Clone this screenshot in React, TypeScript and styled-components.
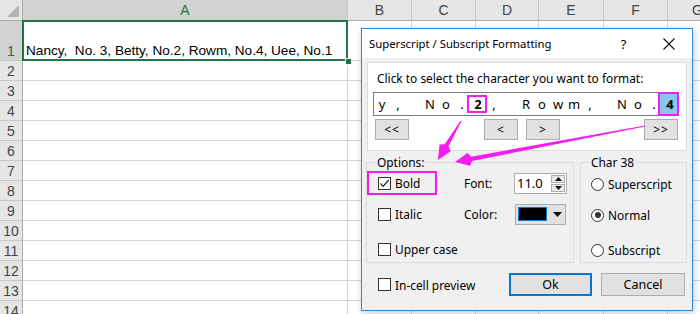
import React from 'react'
import styled, { createGlobalStyle, css } from 'styled-components'

const GlobalStyle = createGlobalStyle`
  html, body {
    margin: 0;
    padding: 0;
    background: #fff;
  }
  body {
    width: 700px;
    height: 314px;
    overflow: hidden;
    font-family: "Noto Sans", "Liberation Sans", sans-serif;
  }
`

const columns = [
  { name: 'A', width: 325 },
  { name: 'B', width: 64 },
  { name: 'C', width: 64 },
  { name: 'D', width: 63 },
  { name: 'E', width: 65 },
  { name: 'F', width: 64 },
  { name: 'G', width: 60 },
]
const rowNumbers = [1, 2, 3, 4, 5, 6, 7, 8, 9, 10, 11, 12, 13, 14]
const stripChars = ['y', ',', ' ', 'N', 'o', '.', '2', ',', ' ', 'R', 'o', 'w', 'm', ',', ' ', 'N', 'o', '.', '4']

const MAGENTA = '#f51cf0'

// tapered arrow outline, tail -> tip
const arrowPoints = (x1: number, y1: number, x2: number, y2: number) => {
  const dx = x2 - x1
  const dy = y2 - y1
  const len = Math.sqrt(dx * dx + dy * dy)
  const ux = dx / len
  const uy = dy / len
  const nx = -uy
  const ny = ux
  const headLen = 17
  const headHalf = 6.5
  const neckHalf = 2.2
  const tailHalf = 0.6
  const neckX = x2 - ux * headLen
  const neckY = y2 - uy * headLen
  const pts = [
    [x1 + nx * tailHalf, y1 + ny * tailHalf],
    [neckX + nx * neckHalf, neckY + ny * neckHalf],
    [neckX + nx * headHalf + ux * 3, neckY + ny * headHalf + uy * 3],
    [x2, y2],
    [neckX - nx * headHalf + ux * 3, neckY - ny * headHalf + uy * 3],
    [neckX - nx * neckHalf, neckY - ny * neckHalf],
    [x1 - nx * tailHalf, y1 - ny * tailHalf],
  ]
  return pts.map(p => `${p[0].toFixed(1)},${p[1].toFixed(1)}`).join(' ')
}

const App = () => {
  return (
    <>
      <GlobalStyle />
      <Sheet>
        <HeaderRow>
          <Corner />
          {columns.map(col => (
            <ColHead key={col.name} $width={col.width} $selected={col.name === 'A'}>{col.name}</ColHead>
          ))}
        </HeaderRow>
        {rowNumbers.map(n => (
          <Row key={n} $height={n === 1 ? 40 : 20}>
            <RowHead $selected={n === 1}>{n}</RowHead>
            {columns.map(col => (
              <Cell key={col.name} $width={col.width} $active={n === 1 && col.name === 'A'}>
                {n === 1 && col.name === 'A' ? 'Nancy,  No. 3, Betty, No.2, Rowm, No.4, Uee, No.1' : null}
              </Cell>
            ))}
          </Row>
        ))}

        <Dialog>
          <TitleBar>
            <Title>Superscript / Subscript Formatting</Title>
            <TitleButton $width={45}>?</TitleButton>
            <TitleButton $width={46}>
              <svg width="12" height="12" viewBox="0 0 12 12">
                <path d="M0.5 0.5 L11.5 11.5 M11.5 0.5 L0.5 11.5" stroke="#111" strokeWidth="1.1" fill="none" />
              </svg>
            </TitleButton>
          </TitleBar>
          <DialogBody>
            <Panel>
              <Prompt>Click to select the character you want to format:</Prompt>
              <Strip>
                {stripChars.map((ch, i) => (
                  <CharCell key={i} $mark={i === 6 ? 'outline' : i === 18 ? 'active' : undefined}>
                    <Glyph $bold={i === 6 || i === 18}>{ch}</Glyph>
                  </CharCell>
                ))}
              </Strip>
              <NavRow>
                <NavButton>&lt;&lt;</NavButton>
                <NavGroup>
                  <NavButton>&lt;</NavButton>
                  <NavButton>&gt;</NavButton>
                </NavGroup>
                <NavButton $push>&gt;&gt;</NavButton>
              </NavRow>
            </Panel>

            <Groups>
              <Group $width={208}>
                <Legend>Options:</Legend>
                <OptionsGrid>
                  <CheckItem $highlight>
                    <CheckBox>
                      <svg width="11" height="11" viewBox="0 0 11 11">
                        <path d="M1.5 5.5 L4.2 8.3 L9.6 2" stroke="#222" strokeWidth="1.2" fill="none" />
                      </svg>
                    </CheckBox>
                    Bold
                  </CheckItem>
                  <FieldLabel>Font:</FieldLabel>
                  <SpinBox>
                    <SpinValue>11.0</SpinValue>
                    <SpinButtons>
                      <SpinArrow>
                        <svg width="7" height="4" viewBox="0 0 7 4"><path d="M0 4 L3.5 0 L7 4 Z" fill="#111" /></svg>
                      </SpinArrow>
                      <SpinArrow>
                        <svg width="7" height="4" viewBox="0 0 7 4"><path d="M0 0 L3.5 4 L7 0 Z" fill="#111" /></svg>
                      </SpinArrow>
                    </SpinButtons>
                  </SpinBox>

                  <CheckItem>
                    <CheckBox />
                    Italic
                  </CheckItem>
                  <FieldLabel>Color:</FieldLabel>
                  <ColorCombo>
                    <Swatch />
                    <svg width="9" height="5" viewBox="0 0 9 5"><path d="M0 0 L4.5 5 L9 0 Z" fill="#111" /></svg>
                  </ColorCombo>

                  <CheckItem>
                    <CheckBox />
                    Upper case
                  </CheckItem>
                </OptionsGrid>
              </Group>

              <Group $width={107}>
                <Legend>Char 38</Legend>
                <RadioList>
                  <RadioItem><Radio />Superscript</RadioItem>
                  <RadioItem><Radio $checked />Normal</RadioItem>
                  <RadioItem><Radio />Subscript</RadioItem>
                </RadioList>
              </Group>
            </Groups>

            <BottomRow>
              <CheckItem>
                <CheckBox />
                In-cell preview
              </CheckItem>
              <DialogButton $primary>Ok</DialogButton>
              <DialogButton>Cancel</DialogButton>
            </BottomRow>
          </DialogBody>
        </Dialog>

        <Arrows width="700" height="314" viewBox="0 0 700 314">
          <polygon points={arrowPoints(461, 121, 438, 160)} fill={MAGENTA} />
          <polygon points={arrowPoints(645, 126, 455, 162)} fill={MAGENTA} />
        </Arrows>
      </Sheet>
    </>
  )
}

// sheet
const Sheet = styled.div`
  position: relative;
  width: 700px;
  height: 314px;
  overflow: hidden;
  background: #fff;
  font-family: "Liberation Sans", Arial, sans-serif;
`
const HeaderRow = styled.div`
  display: flex;
  height: 21px;
`
const headBase = css`
  box-sizing: border-box;
  flex: none;
  display: flex;
  align-items: center;
  justify-content: center;
  background: #e6e6e6;
  color: #444;
  font-size: 14px;
  font-family: "Liberation Sans", Arial, sans-serif;
`
const Corner = styled.div`
  ${headBase};
  width: 23px;
  position: relative;
  border-right: 1px solid #ababab;
  border-bottom: 1px solid #ababab;
  &::after {
    content: '';
    position: absolute;
    right: 3px;
    bottom: 3px;
    border-style: solid;
    border-width: 0 0 12px 12px;
    border-color: transparent transparent #b4b4b4 transparent;
  }
`
const ColHead = styled.div<{ $width: number; $selected?: boolean }>`
  ${headBase};
  width: ${p => p.$width}px;
  border-right: 1px solid #c6c6c6;
  border-bottom: 1px solid #ababab;
  ${p => p.$selected && css`
    background: #d2d2d2;
    color: #217346;
  `}
`
const Row = styled.div<{ $height: number }>`
  display: flex;
  height: ${p => p.$height}px;
`
const RowHead = styled.div<{ $selected?: boolean }>`
  ${headBase};
  width: 23px;
  align-items: flex-end;
  padding-bottom: 1px;
  border-right: 1px solid #ababab;
  border-bottom: 1px solid #c6c6c6;
  ${p => p.$selected && css`
    background: #d2d2d2;
    color: #217346;
  `}
`
const Cell = styled.div<{ $width: number; $active?: boolean }>`
  box-sizing: border-box;
  flex: none;
  width: ${p => p.$width}px;
  border-right: 1px solid #d4d4d4;
  border-bottom: 1px solid #d4d4d4;
  display: flex;
  align-items: flex-end;
  padding: 0 0 2px 3px;
  font-size: 13.6px;
  color: #000;
  white-space: pre;
  ${p => p.$active && css`
    position: relative;
    &::after {
      content: '';
      position: absolute;
      inset: -1px -1px -1px -1px;
      border: 2px solid #217346;
    }
    &::before {
      content: '';
      position: absolute;
      right: -4px;
      bottom: -4px;
      width: 5px;
      height: 5px;
      background: #217346;
      box-shadow: 0 0 0 1px #fff;
      z-index: 1;
    }
  `}
`

// dialog window
const Dialog = styled.div`
  position: absolute;
  left: 361px;
  top: 28px;
  width: 332px;
  height: 283px;
  box-sizing: border-box;
  border: 1px solid #2a8ad4;
  background: #f0f0f0;
  box-shadow: 1px 2px 7px rgba(0, 0, 0, 0.22);
  font-family: "Noto Sans", "Liberation Sans", sans-serif;
  font-size: 11.9px;
  color: #000;
`
const TitleBar = styled.div`
  display: flex;
  align-items: center;
  height: 29px;
  background: #fff;
  padding-left: 7px;
`
const Title = styled.div`
  flex: 1;
  font-size: 11.3px;
`
const TitleButton = styled.div<{ $width: number }>`
  width: ${p => p.$width}px;
  height: 29px;
  display: flex;
  align-items: center;
  justify-content: center;
  font-size: 13px;
`
const DialogBody = styled.div`
  padding: 4px 5px 0 4px;
`
const Panel = styled.div`
  height: 89px;
  box-sizing: border-box;
  margin-left: 1px;
  background: #fff;
  border: 1px solid #dcdcdc;
  padding: 7px 6px 0 5px;
`
const Prompt = styled.div`
  line-height: 16px;
  margin-left: 4px;
`
const Strip = styled.div`
  display: flex;
  width: 306px;
  height: 24px;
  box-sizing: border-box;
  margin-top: 6px;
  border: 1px solid #7a7a7a;
  background: #fff;
`
const CharCell = styled.div<{ $mark?: 'outline' | 'active' }>`
  position: relative;
  width: 16px;
  flex: none;
  display: flex;
  align-items: center;
  justify-content: center;
  font-size: 13px;
  ${p => p.$mark === 'outline' && css`
    &::before {
      content: '';
      position: absolute;
      left: -3px;
      right: -1px;
      top: 2px;
      bottom: 2px;
      border: 2px solid ${MAGENTA};
    }
  `}
  ${p => p.$mark === 'active' && css`
    &::before {
      content: '';
      position: absolute;
      left: -4px;
      right: -1px;
      top: -1px;
      bottom: -1px;
      background: #87c8ea;
      border: 2px solid ${MAGENTA};
    }
  `}
`
const Glyph = styled.span<{ $bold?: boolean }>`
  position: relative;
  font-weight: ${p => (p.$bold ? 700 : 400)};
  white-space: pre;
`
const NavRow = styled.div`
  display: flex;
  margin-top: 3px;
  padding-left: 2px;
`
const NavGroup = styled.div`
  display: flex;
  gap: 8px;
  margin-left: 75px;
`
const NavButton = styled.div<{ $push?: boolean }>`
  width: 34px;
  height: 21px;
  box-sizing: border-box;
  display: flex;
  align-items: center;
  justify-content: center;
  background: #e1e1e1;
  border: 1px solid #adadad;
  font-size: 12px;
  letter-spacing: 1px;
  ${p => p.$push && css`
    margin-left: auto;
    margin-right: 2px;
  `}
`
const Groups = styled.div`
  display: flex;
  gap: 6px;
  margin-top: 3px;
`
const Group = styled.fieldset<{ $width: number }>`
  box-sizing: border-box;
  width: ${p => p.$width}px;
  height: 109px;
  margin: 0;
  padding: 0 0 0 10px;
  border: 1px solid #dcdcdc;
  min-width: 0;
`
const Legend = styled.legend`
  padding: 0 2px;
  margin-left: -2px;
  line-height: 16px;
`
const OptionsGrid = styled.div`
  display: grid;
  grid-template-columns: 86px 50px 53px;
  grid-template-rows: 26px 36px 34px;
  align-items: center;
  padding-left: 1px;
`
const CheckItem = styled.div<{ $highlight?: boolean }>`
  position: relative;
  display: flex;
  align-items: center;
  gap: 4px;
  white-space: nowrap;
  ${p => p.$highlight && css`
    &::after {
      content: '';
      position: absolute;
      left: -11px;
      top: 50%;
      margin-top: -12px;
      width: 70px;
      height: 24px;
      box-sizing: border-box;
      border: 2px solid ${MAGENTA};
    }
  `}
`
const CheckBox = styled.div`
  width: 13px;
  height: 13px;
  box-sizing: border-box;
  border: 1px solid #333;
  background: #fff;
  display: flex;
  align-items: center;
  justify-content: center;
  flex: none;
`
const FieldLabel = styled.div``
const SpinBox = styled.div`
  width: 53px;
  height: 21px;
  box-sizing: border-box;
  border: 1px solid #acacac;
  background: #fff;
  display: flex;
  align-items: center;
  padding-right: 1px;
`
const SpinValue = styled.div`
  flex: 1;
  padding-left: 2px;
  font-size: 13px;
`
const SpinButtons = styled.div`
  display: flex;
  flex-direction: column;
  gap: 1px;
`
const SpinArrow = styled.div`
  width: 14px;
  height: 8px;
  box-sizing: border-box;
  border: 1px solid #adadad;
  background: #e8e8e8;
  display: flex;
  align-items: center;
  justify-content: center;
`
const ColorCombo = styled.div`
  width: 51px;
  height: 21px;
  box-sizing: border-box;
  border: 1px solid #adadad;
  background: #e1e1e1;
  display: flex;
  align-items: center;
  gap: 7px;
  padding-left: 3px;
  margin-left: 1px;
`
const Swatch = styled.div`
  width: 27px;
  height: 12px;
  background: #000;
  box-shadow: 0 0 0 1px #0078d7;
`
const RadioList = styled.div`
  display: grid;
  grid-template-rows: 26px 36px 34px;
  align-items: center;
  padding-top: 1px;
`
const RadioItem = styled.div`
  display: flex;
  align-items: center;
  gap: 4px;
  white-space: nowrap;
`
const Radio = styled.div<{ $checked?: boolean }>`
  width: 13px;
  height: 13px;
  box-sizing: border-box;
  border: 1px solid #333;
  border-radius: 50%;
  background: #fff;
  display: flex;
  align-items: center;
  justify-content: center;
  flex: none;
  ${p => p.$checked && css`
    &::after {
      content: '';
      width: 6px;
      height: 6px;
      border-radius: 50%;
      background: #333;
    }
  `}
`
const BottomRow = styled.div`
  display: flex;
  align-items: center;
  height: 23px;
  margin-top: 10px;
  padding-left: 12px;
`
const DialogButton = styled.div<{ $primary?: boolean }>`
  width: 84px;
  height: 23px;
  box-sizing: border-box;
  display: flex;
  align-items: center;
  justify-content: center;
  background: #e1e1e1;
  border: 1px solid #adadad;
  font-size: 12.5px;
  margin-left: 9px;
  margin-right: 2px;
  ${p => p.$primary && css`
    width: 83px;
    margin-left: auto;
    margin-right: 0;
    border: 2px solid #0078d7;
  `}
`
const Arrows = styled.svg`
  position: absolute;
  left: 0;
  top: 0;
  pointer-events: none;
`

export default App
